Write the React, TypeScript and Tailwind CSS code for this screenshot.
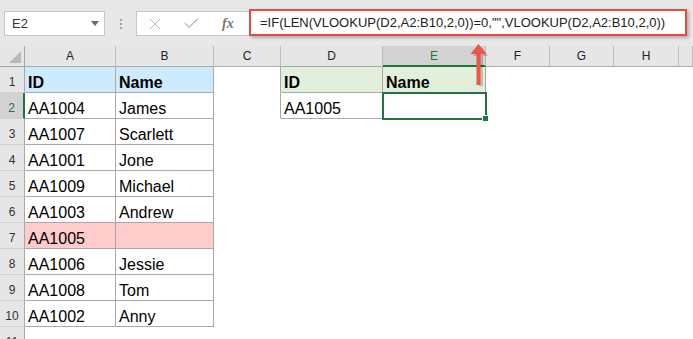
import { Check, X } from "lucide-react";

const cols = ["A", "B", "C", "D", "E", "F", "G", "H", ""];

const tableRows: [string, string][] = [
  ["ID", "Name"],
  ["AA1004", "James"],
  ["AA1007", "Scarlett"],
  ["AA1001", "Jone"],
  ["AA1009", "Michael"],
  ["AA1003", "Andrew"],
  ["AA1005", ""],
  ["AA1006", "Jessie"],
  ["AA1008", "Tom"],
  ["AA1002", "Anny"],
];

const lookupRows: [string, string][] = [
  ["ID", "Name"],
  ["AA1005", ""],
];

function cellClass(row: number, col: number) {
  // col: 1 = A ... 9 = I
  const inFirst = row >= 1 && row <= 10 && (col === 1 || col === 2);
  const inSecond = row >= 1 && row <= 2 && (col === 4 || col === 5);
  const leftOfSecond = row >= 1 && row <= 2 && col === 3;

  let bg = "bg-white";
  if (inFirst && row === 1) bg = "bg-[#cdebfd]";
  if (inFirst && row === 7) bg = "bg-[#ffcccc]";
  if (inSecond && row === 1) bg = "bg-[#e2efda]";

  const right = inFirst || inSecond || leftOfSecond ? "border-r-[#a9a9a9]" : "border-r-transparent";
  const bottom = inFirst || inSecond ? "border-b-[#a9a9a9]" : "border-b-transparent";
  return `${bg} ${right} ${bottom}`;
}

function Cell({ row, col, text }: { row: number; col: number; text: string }) {
  const active = row === 2 && col === 5;
  return (
    <div
      className={`relative flex items-end border-r border-b pl-[3px] text-[16px] leading-[18px] text-black ${cellClass(row, col)} ${
        row === 1 ? "font-bold" : ""
      }`}
    >
      <span className="whitespace-nowrap">{text}</span>
      {active && (
        <div className="absolute -left-px -top-px z-10 h-[28px] w-[105px] border-2 border-[#217346]">
          <div className="absolute -bottom-[4px] -right-[4px] h-[7px] w-[7px] border border-white bg-[#217346]" />
        </div>
      )}
    </div>
  );
}

function RowHeader({ n }: { n: number }) {
  const selected = n === 2;
  return (
    <div
      className={`flex items-end justify-center border-b border-b-[#d0d0d0] pb-[3px] text-[12px] leading-[14px] ${
        selected
          ? "border-r-2 border-r-[#217346] bg-[#d2d2d2] text-[#217346]"
          : "border-r border-r-[#a9a9a9] bg-[#e6e6e6] text-[#333]"
      }`}
    >
      {n}
    </div>
  );
}

export default function App() {
  const rows = Array.from({ length: 11 }, (_, i) => i + 1);

  return (
    <div className="relative h-[339px] w-[693px] overflow-hidden bg-white font-['Liberation_Sans',Arial,sans-serif]">
      {/* formula bar */}
      <div className="flex h-[46px] items-start bg-[#e8e8e8] pl-[4px] pt-[11px]">
        <div className="flex h-[25px] w-[101px] items-center justify-between border border-[#c6c6c6] bg-white pl-[7px] pr-[5px] text-[13px] text-[#333]">
          <span>E2</span>
          <svg width="8" height="5" viewBox="0 0 8 5">
            <path d="M0 0h8L4 5z" fill="#6b6b6b" />
          </svg>
        </div>
        <div className="flex h-[25px] w-[31px] flex-col items-center justify-center gap-[2px]">
          <div className="h-[2px] w-[2px] bg-[#a0a0a0]" />
          <div className="h-[2px] w-[2px] bg-[#a0a0a0]" />
          <div className="h-[2px] w-[2px] bg-[#a0a0a0]" />
        </div>
        <div className="flex h-[25px] w-[114px] items-center border border-r-0 border-[#c6c6c6] bg-white pl-[8px]">
          <X size={20} strokeWidth={1.2} color="#b4b4b4" />
          <Check size={19} strokeWidth={1.4} color="#b4b4b4" className="ml-[17px]" />
          <span className="ml-[21px] font-['Liberation_Serif',serif] text-[14px] font-bold italic text-[#777]">
            fx
          </span>
        </div>
        <div className="-ml-px -mt-[2px] flex h-[27px] w-[438px] items-center border-2 border-[#ea4a3d] bg-white pl-[9px] text-[13px] text-[#222] shadow-[2px_2px_3px_rgba(0,0,0,0.25)]">
          =IF(LEN(VLOOKUP(D2,A2:B10,2,0))=0,"",VLOOKUP(D2,A2:B10,2,0))
        </div>
      </div>

      {/* sheet */}
      <div className="grid grid-cols-[25px_91px_98px_67px_102px_103px_64px_64px_65px_1fr] grid-rows-[21px_repeat(11,26px)]">
        {/* corner */}
        <div className="relative border-r border-b border-[#a9a9a9] bg-[#e6e6e6]">
          <svg className="absolute bottom-[3px] right-[3px]" width="12" height="12" viewBox="0 0 12 12">
            <path d="M12 0V12H0z" fill="#b8b8b8" />
          </svg>
        </div>
        {cols.map((c, i) => {
          const selected = c === "E";
          return (
            <div
              key={i}
              className={`flex items-center justify-center border-r border-r-[#bdbdbd] text-[12px] ${
                selected
                  ? "border-b-2 border-b-[#217346] bg-[#d2d2d2] text-[#217346]"
                  : "border-b border-b-[#a9a9a9] bg-[#e6e6e6] text-[#222]"
              }`}
            >
              {c}
            </div>
          );
        })}

        {rows.map((r) => (
          <div key={r} className="contents">
            <RowHeader n={r} />
            {cols.map((_, ci) => {
              const col = ci + 1;
              let text = "";
              if (r <= 10 && col === 1) text = tableRows[r - 1][0];
              if (r <= 10 && col === 2) text = tableRows[r - 1][1];
              if (r <= 2 && col === 4) text = lookupRows[r - 1][0];
              if (r <= 2 && col === 5) text = lookupRows[r - 1][1];
              return <Cell key={ci} row={r} col={col} text={text} />;
            })}
          </div>
        ))}
      </div>

      {/* callout arrow */}
      <svg className="absolute left-[466px] top-[40px]" width="28" height="50" viewBox="0 0 28 50">
        <path d="M14.5 6L22 16H17V46H13V16H7z" fill="rgba(0,0,0,0.18)" />
        <path d="M12.5 4L20.5 14H14.5V45H10.5V14H4.5z" fill="#ef5545" />
      </svg>
    </div>
  );
}
